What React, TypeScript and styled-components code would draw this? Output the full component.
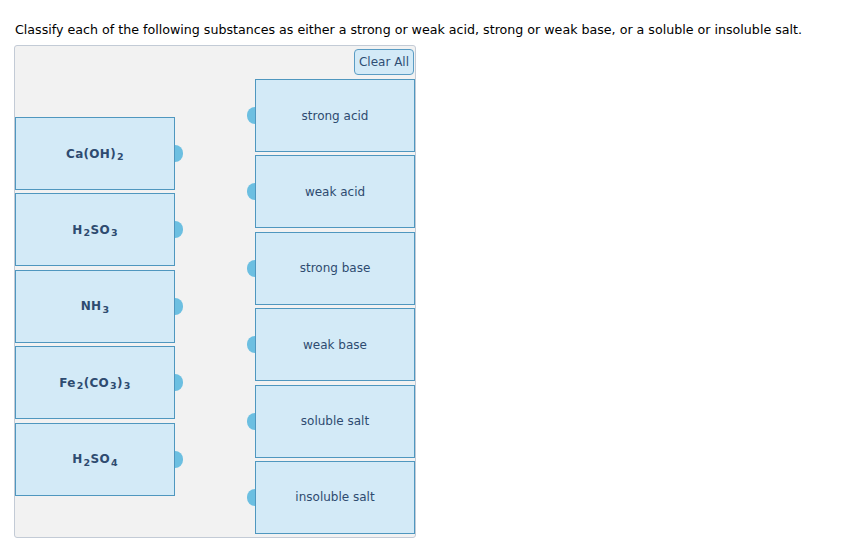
import React from 'react';
import styled, { createGlobalStyle } from 'styled-components';

const GlobalStyle = createGlobalStyle`
  html, body {
    margin: 0;
    padding: 0;
    background: #ffffff;
  }
  body {
    font-family: 'DejaVu Sans', Verdana, sans-serif;
  }
`;

type Chem = { id: string; parts: (string | { sub: string })[] };

const substances: Chem[] = [
  { id: 'caoh2', parts: ['Ca(OH)', { sub: '2' }] },
  { id: 'h2so3', parts: ['H', { sub: '2' }, 'SO', { sub: '3' }] },
  { id: 'nh3', parts: ['NH', { sub: '3' }] },
  { id: 'fe2co33', parts: ['Fe', { sub: '2' }, '(CO', { sub: '3' }, ')', { sub: '3' }] },
  { id: 'h2so4', parts: ['H', { sub: '2' }, 'SO', { sub: '4' }] },
];

const categories = [
  'strong acid',
  'weak acid',
  'strong base',
  'weak base',
  'soluble salt',
  'insoluble salt',
];

export default function App() {
  return (
    <>
      <GlobalStyle />
      <Page>
        <Prompt>
          Classify each of the following substances as either a strong or weak acid, strong or
          weak base, or a soluble or insoluble salt.
        </Prompt>
        <Board>
          <LeftColumn>
            {substances.map((s) => (
              <Card key={s.id} $bold>
                {s.parts.map((p, i) =>
                  typeof p === 'string' ? <span key={i}>{p}</span> : <Sub key={i}>{p.sub}</Sub>
                )}
                <Pin $side="right" />
              </Card>
            ))}
          </LeftColumn>
          <RightColumn>
            <ClearButton type="button">Clear All</ClearButton>
            <Targets>
              {categories.map((c) => (
                <Card key={c}>
                  {c}
                  <Pin $side="left" />
                </Card>
              ))}
            </Targets>
          </RightColumn>
        </Board>
      </Page>
    </>
  );
}

const Page = styled.div`
  padding: 22px 14px 10px 14px;
`;

const Prompt = styled.p`
  margin: 0 0 7px 1px;
  font-size: 12.65px;
  line-height: 16px;
  color: #000000;
`;

const Board = styled.div`
  box-sizing: border-box;
  width: 402px;
  height: 493px;
  display: flex;
  justify-content: space-between;
  background: #f2f2f2;
  border: 1px solid #c3cbd6;
  border-radius: 3px;
`;

const LeftColumn = styled.div`
  display: flex;
  flex-direction: column;
  gap: 3.4px;
  padding-top: 71px;
`;

const RightColumn = styled.div`
  display: flex;
  flex-direction: column;
  align-items: flex-end;
  padding-top: 3px;
`;

const Targets = styled.div`
  display: flex;
  flex-direction: column;
  gap: 3.4px;
  margin-top: 4px;
`;

const ClearButton = styled.button`
  box-sizing: border-box;
  width: 60px;
  height: 26px;
  margin-right: 1px;
  padding: 0;
  font-family: 'DejaVu Sans', Verdana, sans-serif;
  font-size: 12px;
  color: #2f4e74;
  background: #d3eaf7;
  border: 1px solid #5a9cc4;
  border-radius: 4px;
`;

const Card = styled.div<{ $bold?: boolean }>`
  position: relative;
  box-sizing: border-box;
  width: 160px;
  height: 73px;
  display: flex;
  align-items: center;
  justify-content: center;
  background: #d3eaf7;
  border: 1px solid #4f97bf;
  color: #2e4b70;
  font-size: 12px;
  font-weight: ${(p) => (p.$bold ? 700 : 400)};
  letter-spacing: ${(p) => (p.$bold ? '0.3px' : '0')};
`;

const Sub = styled.span`
  font-size: 9.5px;
  position: relative;
  top: 3px;
  margin-left: 1px;
`;

const Pin = styled.span<{ $side: 'left' | 'right' }>`
  position: absolute;
  top: 50%;
  width: 8px;
  height: 17px;
  margin-top: -8.5px;
  background: #6cbfe1;
  ${(p) =>
    p.$side === 'right'
      ? 'right: -9px; border-radius: 0 9px 9px 0;'
      : 'left: -9px; border-radius: 9px 0 0 9px;'}
`;
